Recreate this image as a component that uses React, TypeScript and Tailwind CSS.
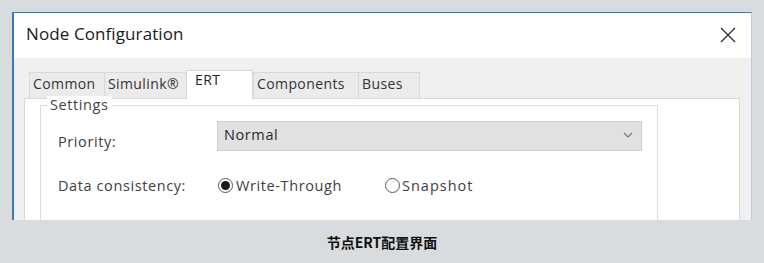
import React from "react";

const tabs = [
  { label: "Common", w: "w-[75px]" },
  { label: "Simulink®", w: "w-[82px]" },
  { label: "ERT", w: "w-[67px]", active: true },
  { label: "Components", w: "w-[105px]" },
  { label: "Buses", w: "w-[62px]" },
];

function Radio({ checked }: { checked?: boolean }) {
  return (
    <span className="flex h-[15px] w-[15px] shrink-0 items-center justify-center rounded-full border border-[#5a5a5a] bg-white">
      {checked && <span className="h-[9px] w-[9px] rounded-full bg-[#1a1a1a]" />}
    </span>
  );
}

export default function App() {
  return (
    <div className="flex h-[263px] w-[764px] flex-col bg-[#d9dcdf] font-['Open_Sans','Liberation_Sans',sans-serif]">
      <div className="px-[12px] pt-[12px]">
        <div className="flex h-[208px] flex-col border-l-2 border-t border-r border-[#3a78bd] border-r-[#b8cde4]">
          {/* title bar */}
          <div className="flex h-[45px] items-center justify-between bg-white pb-[2px] pl-[12px] pr-[14px]">
            <span className="-mt-[2px] text-[17px] tracking-[0.1px] text-[#1b1b1b]">Node Configuration</span>
            <svg width="18" height="18" viewBox="0 0 18 18" className="text-[#333]">
              <path d="M2 2 L16 16 M16 2 L2 16" stroke="currentColor" strokeWidth="1.4" />
            </svg>
          </div>

          {/* body */}
          <div className="flex flex-1 flex-col bg-[#f0f0f0] pl-[10px] pr-[11px] pt-[12px]">
            <div className="flex h-[28px] items-end pl-[5px] text-[14px] tracking-[0.4px] text-[#333]">
              {tabs.map((t) =>
                t.active ? (
                  <div
                    key={t.label}
                    className={`${t.w} relative -mb-px flex h-[29px] items-start border-x border-t border-[#d9d9d9] bg-white pl-[8px] text-[#222]`}
                  >
                    <span className="-mt-[2px]">{t.label}</span>
                  </div>
                ) : (
                  <div
                    key={t.label}
                    className={`${t.w} flex h-[26px] items-center border-l border-t border-[#d9d9d9] bg-[#ebebeb] pb-[4px] pl-[3px] last:border-r`}
                  >
                    {t.label}
                  </div>
                )
              )}
            </div>

            <div className="flex-1 border-x border-t border-[#dadada] bg-white pl-[15px] pr-[81px] pt-[6px]">
              <div className="relative h-full border-x border-t border-[#dcdcdc] pl-[17px] pr-[15px] pt-[15px] text-[14.5px] tracking-[0.6px] text-[#404040]">
                <span className="absolute -top-[10px] left-[6px] bg-white px-[3px] leading-[18px] text-[#444]">
                  Settings
                </span>

                <div className="flex items-start">
                  <span className="w-[159px] pt-[10px]">Priority:</span>
                  <div className="flex h-[30px] flex-1 items-center justify-between border border-[#cfcfcf] bg-[#e1e1e1] pb-[3px] pl-[6px] pr-[8px] text-[#2a2a2a]">
                    <span>Normal</span>
                    <svg width="10" height="6" viewBox="0 0 10 6">
                      <path d="M1 1 L5 5 L9 1" fill="none" stroke="#777" strokeWidth="1.2" />
                    </svg>
                  </div>
                </div>

                <div className="mt-[22px] flex items-center">
                  <span className="w-[160px]">Data consistency:</span>
                  <div className="flex w-[167px] items-center gap-[3px]">
                    <Radio checked />
                    <span>Write-Through</span>
                  </div>
                  <div className="flex items-center gap-[2px]">
                    <Radio />
                    <span className="tracking-[1px]">Snapshot</span>
                  </div>
                </div>
              </div>
            </div>
          </div>
        </div>
      </div>

      <div className="flex flex-1 items-center justify-center pt-[1px] text-[14px] font-bold text-[#111] font-['Noto_Sans_CJK_SC','Noto_Sans',sans-serif]">
        节点ERT配置界面
      </div>
    </div>
  );
}
